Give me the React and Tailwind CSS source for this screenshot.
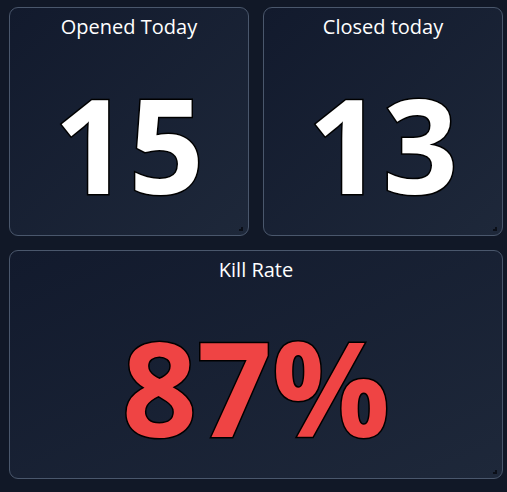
import React from "react";

function Card({ title, value, valueClass, className = "" }) {
  return (
    <div
      className={`relative flex h-[229px] flex-col items-center rounded-[9px] border border-[#4a576c] bg-linear-to-br from-[#121a2d] to-[#1e283a] ${className}`}
    >
      <div className="pt-[5px] text-[20px] leading-[28px] text-white font-['Open_Sans',sans-serif]">
        {title}
      </div>
      <div className="flex flex-1 items-center justify-center pt-[10px]">
        <span
          className={`text-[131px] font-bold leading-none font-['Open_Sans',sans-serif] [-webkit-text-stroke:3px_#000] [paint-order:stroke_fill] ${valueClass}`}
        >
          {value}
        </span>
      </div>
      <div className="absolute bottom-[4px] right-[5px] h-[4px] w-[4px] border-b-2 border-r-2 border-[#0b0f18]" />
    </div>
  );
}

export default function App() {
  return (
    <div className="min-h-screen bg-[#111827] pt-[7px] pl-[9px] pr-[4px]">
      <div className="grid grid-cols-2 gap-[14px]">
        <Card title="Opened Today" value="15" valueClass="text-white" />
        <Card title="Closed today" value="13" valueClass="text-white" />
        <Card title="Kill Rate" value="87%" valueClass="text-[#ef4444]" className="col-span-2" />
      </div>
    </div>
  );
}
